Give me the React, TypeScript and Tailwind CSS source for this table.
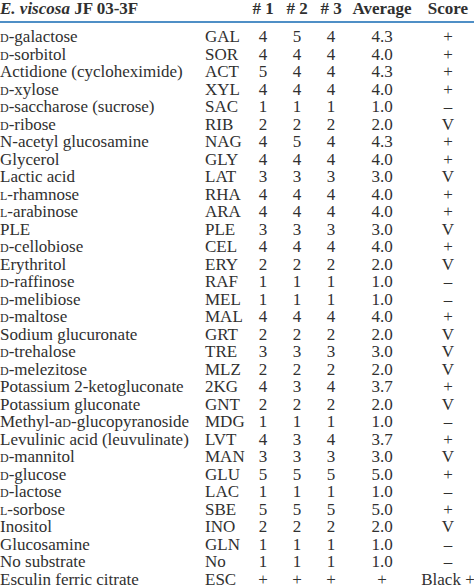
import React from "react";

type Row = [React.ReactNode, string, string, string, string, string, string];

const sc = (s: string) => <span className="[font-variant-caps:small-caps]">{s}</span>;

const rows: Row[] = [
  [<>{sc("d")}-galactose</>, "GAL", "4", "5", "4", "4.3", "+"],
  [<>{sc("d")}-sorbitol</>, "SOR", "4", "4", "4", "4.0", "+"],
  ["Actidione (cycloheximide)", "ACT", "5", "4", "4", "4.3", "+"],
  [<>{sc("d")}-xylose</>, "XYL", "4", "4", "4", "4.0", "+"],
  [<>{sc("d")}-saccharose (sucrose)</>, "SAC", "1", "1", "1", "1.0", "–"],
  [<>{sc("d")}-ribose</>, "RIB", "2", "2", "2", "2.0", "V"],
  ["N-acetyl glucosamine", "NAG", "4", "5", "4", "4.3", "+"],
  ["Glycerol", "GLY", "4", "4", "4", "4.0", "+"],
  ["Lactic acid", "LAT", "3", "3", "3", "3.0", "V"],
  [<>{sc("l")}-rhamnose</>, "RHA", "4", "4", "4", "4.0", "+"],
  [<>{sc("l")}-arabinose</>, "ARA", "4", "4", "4", "4.0", "+"],
  ["PLE", "PLE", "3", "3", "3", "3.0", "V"],
  [<>{sc("d")}-cellobiose</>, "CEL", "4", "4", "4", "4.0", "+"],
  ["Erythritol", "ERY", "2", "2", "2", "2.0", "V"],
  [<>{sc("d")}-raffinose</>, "RAF", "1", "1", "1", "1.0", "–"],
  [<>{sc("d")}-melibiose</>, "MEL", "1", "1", "1", "1.0", "–"],
  [<>{sc("d")}-maltose</>, "MAL", "4", "4", "4", "4.0", "+"],
  ["Sodium glucuronate", "GRT", "2", "2", "2", "2.0", "V"],
  [<>{sc("d")}-trehalose</>, "TRE", "3", "3", "3", "3.0", "V"],
  [<>{sc("d")}-melezitose</>, "MLZ", "2", "2", "2", "2.0", "V"],
  ["Potassium 2-ketogluconate", "2KG", "4", "3", "4", "3.7", "+"],
  ["Potassium gluconate", "GNT", "2", "2", "2", "2.0", "V"],
  [<>Methyl-a{sc("d")}-glucopyranoside</>, "MDG", "1", "1", "1", "1.0", "–"],
  ["Levulinic acid (leuvulinate)", "LVT", "4", "3", "4", "3.7", "+"],
  [<>{sc("d")}-mannitol</>, "MAN", "3", "3", "3", "3.0", "V"],
  [<>{sc("d")}-glucose</>, "GLU", "5", "5", "5", "5.0", "+"],
  [<>{sc("d")}-lactose</>, "LAC", "1", "1", "1", "1.0", "–"],
  [<>{sc("l")}-sorbose</>, "SBE", "5", "5", "5", "5.0", "+"],
  ["Inositol", "INO", "2", "2", "2", "2.0", "V"],
  ["Glucosamine", "GLN", "1", "1", "1", "1.0", "–"],
  ["No substrate", "No", "1", "1", "1", "1.0", "–"],
  ["Esculin ferric citrate", "ESC", "+", "+", "+", "+", "Black +"],
];

const grid = "grid grid-cols-[205px_41px_34px_34px_34px_68px_64px] items-center";

export default function App() {
  return (
    <div className="w-[474px] h-[588px] overflow-hidden bg-white text-[#303030] font-['Liberation_Serif',serif] text-[17px]">
      <div className={`${grid} h-[21px] items-end font-bold leading-none pb-[9px]`}>
        <div className="whitespace-nowrap">
          <i>E. viscosa</i> JF 03-3F
        </div>
        <div />
        <div className="text-center"># 1</div>
        <div className="text-center"># 2</div>
        <div className="text-center"># 3</div>
        <div className="text-center">Average</div>
        <div className="text-center">Score</div>
      </div>
      <div className="h-[2px] bg-[#4f8fc6]" />
      <div className="pt-[5px]">
        {rows.map((r, i) => (
          <div key={i} className={`${grid} h-[17.5px] leading-none`}>
            <div className="whitespace-nowrap">{r[0]}</div>
            <div className="whitespace-nowrap">{r[1]}</div>
            <div className="text-center">{r[2]}</div>
            <div className="text-center">{r[3]}</div>
            <div className="text-center">{r[4]}</div>
            <div className="text-center">{r[5]}</div>
            <div className="text-center whitespace-nowrap">{r[6]}</div>
          </div>
        ))}
      </div>
    </div>
  );
}
